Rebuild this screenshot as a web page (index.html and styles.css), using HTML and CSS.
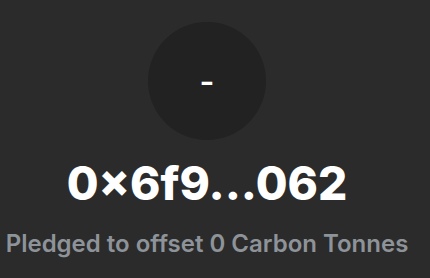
FILE: index.html
```html
<!DOCTYPE html>
<html>
<head>
<meta charset="utf-8">
<link rel="stylesheet" href="styles.css">
</head>
<body>
<div class="profile">
  <div class="avatar"><span class="avatar-text">-</span></div>
  <div class="address">0×6f9...062</div>
  <div class="pledge">Pledged to offset 0 Carbon Tonnes</div>
</div>
</body>
</html>
```
FILE: styles.css
```css
html, body {
  margin: 0;
  padding: 0;
  background: #2b2b2b;
}
body {
  width: 414px;
  height: 278px;
  font-family: Inter, "Noto Sans", sans-serif;
}
.profile {
  display: flex;
  flex-direction: column;
  align-items: center;
  padding-top: 22px;
}
.avatar {
  width: 118px;
  height: 118px;
  border-radius: 50%;
  background: #222222;
  display: flex;
  align-items: center;
  justify-content: center;
}
.avatar-text {
  color: #ffffff;
  font-size: 32px;
  font-weight: 600;
  line-height: 32px;
  margin-top: 2px;
}
.address {
  margin-top: 20px;
  color: #ffffff;
  font-size: 46px;
  font-weight: 800;
  line-height: 46px;
}
.pledge {
  margin-top: 26px;
  color: #8e9399;
  font-size: 24px;
  font-weight: 600;
  line-height: 24px;
  white-space: nowrap;
}
```
